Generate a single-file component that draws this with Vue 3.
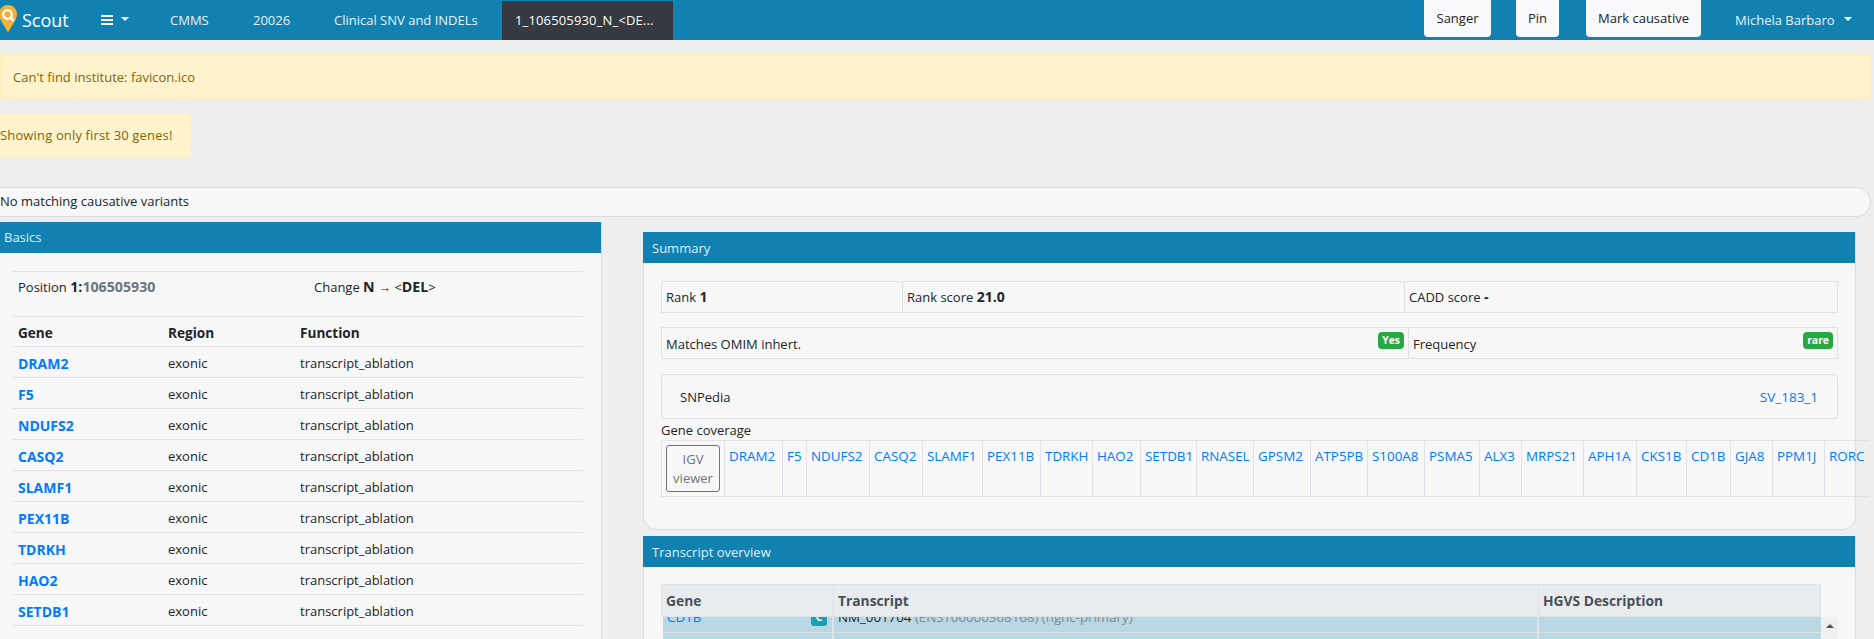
<script setup>
const genes = ['DRAM2','F5','NDUFS2','CASQ2','SLAMF1','PEX11B','TDRKH','HAO2','SETDB1']
const coverage = [
  ['DRAM2',58],['F5',24],['NDUFS2',63],['CASQ2',53],['SLAMF1',60],['PEX11B',58],['TDRKH',52],['HAO2',48],
  ['SETDB1',56],['RNASEL',57],['GPSM2',57],['ATP5PB',57],['S100A8',57],['PSMA5',55],['ALX3',42],['MRPS21',62],
  ['APH1A',53],['CKS1B',50],['CD1B',44],['GJA8',42],['PPM1J',52],['RORC',44]
]
</script>

<template>
  <div class="page">
    <nav class="navbar">
      <a class="brand">
        <svg class="logo" width="18" height="28" viewBox="0 0 18 28">
          <path d="M8 0C3 0-1 4-1 9c0 6 6 12 9 19 3-7 9-13 9-19C17 4 13 0 8 0z" fill="#f5b133"/>
          <circle cx="7.5" cy="9.5" r="4.3" fill="none" stroke="#fff" stroke-width="2.2"/>
          <path d="M10.8 12.8l3 3" stroke="#fff" stroke-width="2.4"/>
        </svg>
        <span>Scout</span>
      </a>
      <div class="menu">
        <span class="burger"><i></i><i></i><i></i></span>
        <span class="caret"></span>
      </div>
      <a class="nav-link cmms">CMMS</a>
      <a class="nav-link num">20026</a>
      <a class="nav-link clinical">Clinical SNV and INDELs</a>
      <a class="nav-link active">1_106505930_N_&lt;DE...</a>
      <div class="nav-right">
        <button class="nbtn sanger">Sanger</button>
        <button class="nbtn pin">Pin</button>
        <button class="nbtn mark">Mark causative</button>
        <a class="user">Michela Barbaro<span class="caret user-caret"></span></a>
      </div>
    </nav>

    <div class="content">
      <div class="alert wide">Can't find institute: favicon.ico</div>
      <div class="alert narrow">Showing only first 30 genes!</div>
      <div class="pill">No matching causative variants</div>

      <div class="columns">
        <section class="panel left">
          <header class="phead basics">Basics</header>
          <div class="left-body">
            <div class="pos-row">
              <span class="pos-a">Position <b>1:<span class="muted">106505930</span></b></span>
              <span>Change <b>N</b> → &lt;<b>DEL</b>&gt;</span>
            </div>
            <div class="grow ghead"><b>Gene</b><b>Region</b><b>Function</b></div>
            <div v-for="g in genes" :key="g" class="grow">
              <a class="blink">{{ g }}</a><span>exonic</span><span>transcript_ablation</span>
            </div>
          </div>
        </section>

        <div class="right">
          <section class="panel summary">
            <header class="phead">Summary</header>
            <div class="sum-body">
              <div class="trow rank-row">
                <div class="c1">Rank <b>1</b></div>
                <div class="c2">Rank score <b>21.0</b></div>
                <div class="c3">CADD score <b>-</b></div>
              </div>
              <div class="trow omim-row">
                <div class="c4"><span class="lbl">Matches OMIM inhert.</span><span class="badge">Yes</span></div>
                <div class="c5"><span class="lbl">Frequency</span><span class="badge">rare</span></div>
              </div>
              <div class="card"><span>SNPedia</span><a class="link">SV_183_1</a></div>
              <div class="cov-label">Gene coverage</div>
              <div class="cov">
                <div class="igv-cell"><button class="igv">IGV<br>viewer</button></div>
                <a v-for="c in coverage" :key="c[0]" class="cov-cell link" :style="{ width: c[1] + 'px' }">{{ c[0] }}</a>
              </div>
            </div>
          </section>

          <section class="panel transcripts">
            <header class="phead">Transcript overview</header>
            <div class="tr-body">
              <div class="tr-table">
                <div class="tr-head">
                  <div class="t1">Gene</div>
                  <div class="t2">Transcript</div>
                  <div class="t3">HGVS Description</div>
                </div>
                <div class="tr-scroll">
                  <div class="tr-rows">
                    <div class="tr-row">
                      <div class="t1 gene-cell"><a class="link">CD1B</a><span class="cbadge">C</span></div>
                      <div class="t2">NM_001704 <span class="muted">(ENST00000368168) (hgnc-primary)</span></div>
                      <div class="t3"></div>
                    </div>
                    <div class="tr-row">
                      <div class="t1"></div><div class="t2"></div><div class="t3"></div>
                    </div>
                  </div>
                  <div class="sbar"><span class="sarrow"></span></div>
                </div>
              </div>
            </div>
          </section>
        </div>
      </div>
    </div>
  </div>
</template>

<style>
html, body { margin: 0; overflow: hidden; background: #eeeeee; }
</style>

<style scoped>
.page {
  width: 1874px;
  height: 639px;
  overflow: hidden;
  background: #eeeeee;
  color: #212529;
  font-family: "Open Sans", "Noto Sans", sans-serif;
  font-size: 13px;
  line-height: 20px;
}
b { font-weight: 700; }
a { cursor: pointer; }

.navbar {
  height: 40px;
  background: #1181b2;
  display: flex;
  align-items: center;
  color: #fff;
}
.brand { display: flex; align-items: center; width: 101px; font-size: 18px; }
.logo { margin: -2px 4px 0 0; flex: none; }
.menu { display: flex; align-items: center; width: 69px; }
.burger { display: flex; flex-direction: column; gap: 2px; width: 12px; }
.burger i { display: block; height: 2px; background: #fff; }
.caret {
  display: inline-block;
  border-top: 4px solid #fff;
  border-left: 4px solid transparent;
  border-right: 4px solid transparent;
}
.menu .caret { margin: -2px 0 0 8px; }
.nav-link { display: block; line-height: 39px; white-space: nowrap; color: #e6f3f8; }
.cmms { width: 83px; }
.num { width: 81px; }
.clinical { width: 168px; }
.active {
  width: 171px;
  box-sizing: border-box;
  padding-left: 13px;
  background: #343a40;
  color: #fff;
  letter-spacing: 0.15px;
}
.nav-right { display: flex; align-items: flex-start; height: 40px; margin-left: 751px; }
.nbtn {
  height: 37px;
  border: 0;
  padding: 0 0 2px;
  background: #f8f9fa;
  border-radius: 0 0 4px 4px;
  color: #212529;
  font: inherit;
}
.sanger { width: 67px; margin-right: 25px; }
.pin { width: 43px; margin-right: 27px; }
.mark { width: 115px; margin-right: 34px; }
.user { display: flex; align-items: center; line-height: 40px; color: #e6f3f8; white-space: nowrap; }
.user-caret { margin-left: 9px; margin-top: -3px; }

.content { padding: 14px 3px 0 0; }
.alert {
  box-sizing: border-box;
  background: #fff3cd;
  border: 1px solid #ffeeba;
  color: #856404;
}
.wide { height: 45px; line-height: 44px; padding-left: 12px; border-radius: 0 4px 4px 0; }
.narrow {
  width: 192px;
  height: 44px;
  line-height: 43px;
  margin-top: 14px;
  border-left: 0;
  border-radius: 0 4px 4px 0;
  letter-spacing: 0.15px;
}
.pill {
  box-sizing: border-box;
  height: 30px;
  line-height: 27px;
  margin-top: 30px;
  background: #f7f7f7;
  border: 1px solid #dcdcdc;
  border-left: 0;
  border-radius: 0 15px 15px 0;
  color: #212529;
}
.columns { display: flex; align-items: flex-start; margin-top: 5px; }

.panel {
  box-sizing: border-box;
  background: #f7f7f7;
  border-right: 1px solid #dddddd;
}
.phead {
  height: 31px;
  line-height: 32px;
  padding-left: 9px;
  background: #1181b2;
  color: #dff0f7;
}
.basics { padding-left: 4px; line-height: 31px; }

.left { width: 602px; height: 460px; }
.left-body { padding: 18px 18px 0 13px; }
.pos-row {
  display: flex;
  height: 46px;
  box-sizing: border-box;
  padding: 5px 0 0 5px;
  border-top: 1px solid #dfe2e6;
  border-bottom: 1px solid #dfe2e6;
}
.pos-a { width: 296px; }
.pos-row b { font-size: 14.2px; }
.trow b { font-size: 14px; }
.muted { color: #6c757d; }
.grow {
  display: grid;
  grid-template-columns: 150px 132px 1fr;
  height: 31px;
  box-sizing: border-box;
  line-height: 33px;
  padding-left: 5px;
  border-bottom: 1px solid #dfe2e6;
}
.ghead { height: 30px; line-height: 32px; }
.ghead b { font-size: 13.6px; }
.blink { color: #007bff; font-weight: 700; font-size: 14px; }
.link { color: #007bff; }

.right { margin-left: 41px; margin-top: 10px; width: 1213px; }
.summary { height: 298px; border-left: 1px solid #dddddd; border-bottom: 1px solid #dddddd; border-radius: 0 0 14px 14px; }
.summary .phead, .transcripts .phead { margin-left: -1px; padding-left: 9px; }
.sum-body { padding: 18px 17px 0 17px; }
.trow {
  display: flex;
  box-sizing: border-box;
  height: 32px;
  border: 1px solid #dfe2e6;
}
.trow > div { box-sizing: border-box; padding-left: 4px; line-height: 30px; }
.c1 { width: 240px; }
.c2 { width: 502px; border-left: 1px solid #dfe2e6; }
.c3 { flex: 1; border-left: 1px solid #dfe2e6; }
.omim-row { margin-top: 14px; }
.c4, .c5 { display: flex; justify-content: space-between; align-items: flex-start; padding-right: 4px; }
.c4 { width: 746px; }
.c5 { flex: 1; border-left: 1px solid #dfe2e6; }
.lbl { margin-top: 1px; }
.badge {
  margin-top: 4px;
  height: 17px;
  line-height: 16px;
  padding: 0 4px;
  border-radius: 4px;
  background: #28a745;
  color: #fff;
  font-size: 10.4px;
  font-weight: 700;
}
.card {
  display: flex;
  justify-content: space-between;
  align-items: center;
  box-sizing: border-box;
  height: 45px;
  margin-top: 15px;
  padding: 0 19px 0 18px;
  border: 1px solid #dcdfe3;
  border-radius: 4px;
}
.card .link { font-size: 13.5px; }
.cov-label { height: 21px; line-height: 22px; }
.cov {
  display: flex;
  box-sizing: border-box;
  width: 1208px;
  height: 57px;
  border: 1px solid #dfe2e6;
  border-right: 0;
}
.igv-cell { box-sizing: border-box; width: 62px; padding: 4px 0 0 4px; flex: none; }
.igv {
  display: block;
  box-sizing: border-box;
  width: 54px;
  height: 47px;
  padding: 0;
  background: transparent;
  border: 1px solid #6c757d;
  border-radius: 3px;
  color: #6c757d;
  font: inherit;
  line-height: 19px;
}
.cov-cell {
  flex: none;
  box-sizing: border-box;
  padding: 5px 0 0 4px;
  border-left: 1px solid #dfe2e6;
  white-space: nowrap;
  font-size: 13.4px;
}

.transcripts { height: 110px; margin-top: 6px; border-left: 1px solid #dddddd; }
.tr-body { padding: 17px 0 0 17px; }
.tr-table { width: 1177px; }
.tr-head {
  display: flex;
  box-sizing: border-box;
  width: 1160px;
  height: 33px;
  background: #e9ecef;
  border: 1px solid #dfe2e6;
  color: #495057;
  font-weight: 700;
  font-size: 13.8px;
  line-height: 31px;
}
.t1 { box-sizing: border-box; width: 171px; padding-left: 4px; flex: none; }
.t2 { box-sizing: border-box; width: 705px; padding-left: 4px; flex: none; border-left: 1px solid #dfe2e6; }
.t3 { box-sizing: border-box; flex: 1; padding-left: 4px; border-left: 1px solid #dfe2e6; }
.tr-scroll { display: flex; height: 22px; overflow: hidden; }
.tr-rows { width: 1160px; flex: none; margin-top: -15px; }
.tr-row {
  display: flex;
  box-sizing: border-box;
  height: 31px;
  margin-left: 2px;
  line-height: 30px;
  background: #b8d8e4;
  border-bottom: 1px solid #dfe2e6;
  color: #212529;
  font-size: 13.3px;
}
.tr-row .t1 { width: 169px; }
.tr-row .t2, .tr-row .t3 { border-left: 2px solid #dfe2e6; }
.tr-row .muted { color: #7d8c96; }
.gene-cell { display: flex; justify-content: space-between; padding-right: 5px; }
.cbadge {
  width: 16px;
  height: 17px;
  margin-top: 7px;
  border-radius: 3px;
  background: #17a2b8;
  color: #fff;
  font-size: 10.5px;
  font-weight: 700;
  line-height: 16px;
  text-align: center;
}
.sbar {
  width: 16px;
  margin-left: 1px;
  background: #f0f0f0;
  display: flex;
  justify-content: center;
  padding-top: 7px;
  box-sizing: border-box;
}
.sarrow {
  width: 0;
  height: 0;
  border-bottom: 4px solid #505050;
  border-left: 4px solid transparent;
  border-right: 4px solid transparent;
}
</style>
